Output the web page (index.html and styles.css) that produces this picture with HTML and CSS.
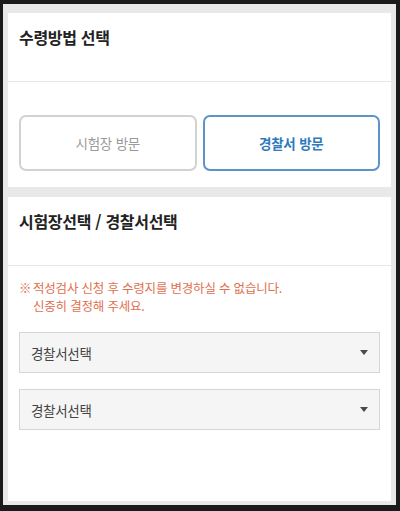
FILE: index.html
```html
<!DOCTYPE html>
<html lang="ko">
<head>
<meta charset="utf-8">
<title>수령방법 선택</title>
<link rel="stylesheet" href="styles.css">
</head>
<body>
<div class="frame">
  <section class="panel panel-method">
    <h2 class="panel-title">수령방법 선택</h2>
    <div class="method-body">
      <div class="method-buttons">
        <button class="method-btn" type="button">시험장 방문</button>
        <button class="method-btn is-active" type="button">경찰서 방문</button>
      </div>
    </div>
  </section>
  <section class="panel panel-place">
    <h2 class="panel-title">시험장선택 / 경찰서선택</h2>
    <div class="place-body">
      <p class="notice"><span class="notice-mark">※</span><span class="notice-text">적성검사 신청 후 수령지를 변경하실 수 없습니다.<br>신중히 결정해 주세요.</span></p>
      <div class="select-box"><span class="select-label">경찰서선택</span><span class="select-arrow"></span></div>
      <div class="select-box"><span class="select-label">경찰서선택</span><span class="select-arrow"></span></div>
    </div>
  </section>
</div>
</body>
</html>
```

FILE: styles.css
```css
* { box-sizing: border-box; }
html, body { margin: 0; padding: 0; }
body {
  background: #1b1b1b;
  width: 400px;
  height: 511px;
  padding: 4px 4px 6px 3px;
  font-family: "Noto Sans CJK KR", "Noto Sans", sans-serif;
  color: #222;
}
.frame {
  height: 100%;
  background: #e9e9e9;
  padding: 9px 5px 4px 5px;
  display: flex;
  flex-direction: column;
  gap: 10px;
}
.panel {
  background: #fff;
}
.panel-title {
  margin: 0;
  height: 69px;
  padding: 12px 11px 0;
  font-size: 16px;
  font-weight: 700;
  line-height: 24px;
  color: #222;
  letter-spacing: -0.3px;
  border-bottom: 1px solid #e6e6e6;
}
.panel-method { height: 174px; }
.method-body {
  padding: 33px 11px 0;
}
.method-buttons {
  display: flex;
  gap: 6px;
}
.method-btn {
  flex: 1;
  height: 56px;
  border: 2px solid #d2d2d2;
  border-radius: 7px;
  background: #fff;
  font-family: inherit;
  font-size: 13.5px;
  color: #9a9a9a;
  letter-spacing: -0.2px;
  padding: 0;
}
.method-btn.is-active {
  border-color: #5c94ca;
  color: #2e7abd;
  font-weight: 700;
}
.panel-place { flex: 1; }
.place-body {
  padding: 13px 11px 0;
}
.notice {
  margin: 0 0 17px;
  display: flex;
  font-size: 12.5px;
  line-height: 18px;
  color: #e0704e;
  letter-spacing: -0.2px;
}
.notice-mark {
  width: 14px;
  flex: none;
}
.select-box {
  height: 41px;
  border: 1px solid #d6d6d6;
  background: #f5f5f5;
  display: flex;
  align-items: center;
  justify-content: space-between;
  padding: 0 11px 0 11px;
  margin-bottom: 16px;
}
.select-label {
  font-size: 13.5px;
  color: #444;
  letter-spacing: -0.3px;
}
.select-arrow {
  width: 0;
  height: 0;
  border-left: 4.5px solid transparent;
  border-right: 4.5px solid transparent;
  border-top: 5px solid #4a4a4a;
}
```
